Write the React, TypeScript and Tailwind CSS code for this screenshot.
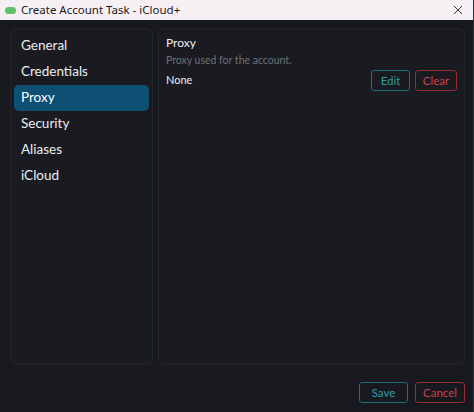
import React from 'react';

const tabs = ['General', 'Credentials', 'Proxy', 'Security', 'Aliases', 'iCloud'];

const TitleBar: React.FC = () => (
  <div className="h-5 flex items-center bg-[#f6eff3] text-[#1a1a1a] pl-[5px] pr-[10px] shrink-0">
    <div className="w-[11px] h-[7px] rounded-full bg-[#5fbf6a] mr-[5px]" />
    <span className="text-[11.5px] font-['Noto_Sans',sans-serif] leading-none">Create Account Task - iCloud+</span>
    <svg className="ml-auto" width="10" height="10" viewBox="0 0 10 10">
      <path d="M1 1 L9 9 M9 1 L1 9" stroke="#333" strokeWidth="1" />
    </svg>
  </div>
);

const App: React.FC = () => {
  const active = 'Proxy';
  return (
    <div className="w-[474px] h-[412px] flex flex-col bg-[#17191e] font-['Lato',sans-serif] overflow-hidden border-r border-[#2c2f35]">
      <TitleBar />
      <div className="flex-1 flex flex-col pl-[10px] pr-[8px] pt-2 pb-[9px]">
        <div className="flex gap-[5px] h-[337px]">
          {/* tab list */}
          <div className="w-[143px] rounded-md border border-[#22262c] bg-[#191b20] px-[3px] pt-[4px] flex flex-col">
            {tabs.map((t) => (
              <div
                key={t}
                className={`h-[26px] flex items-center px-[7px] rounded-[5px] text-[13.5px] pb-[2px] ${
                  t === active ? 'bg-[#0d5074] text-white' : 'text-[#eceef0]'
                }`}
              >
                {t}
              </div>
            ))}
          </div>
          {/* proxy settings */}
          <div className="flex-1 rounded-md border border-[#22262c] bg-[#191b20] px-[7px] pt-[6px]">
            <div className="text-[12px] text-[#eceef0] leading-4">Proxy</div>
            <div className="text-[10.5px] text-[#6c7177] leading-4 mt-[1px]">Proxy used for the account.</div>
            <div className="flex items-center mt-[2px]">
              <span className="text-[11px] text-[#eceef0]">None</span>
              <div className="ml-auto flex gap-[5px]">
                <button className="w-[39px] h-[21px] rounded-[3px] border border-[#1d6f7c] text-[#2a9eaa] text-[11.5px]">Edit</button>
                <button className="w-[42px] h-[21px] rounded-[3px] border border-[#9a2c37] text-[#c8424d] text-[11.5px]">Clear</button>
              </div>
            </div>
          </div>
        </div>
        <div className="mt-auto flex justify-end gap-[7px]">
          <button className="w-[49px] h-[21px] rounded-[3px] border border-[#1d6f7c] text-[#2a9eaa] text-[11.5px]">Save</button>
          <button className="w-[50px] h-[21px] rounded-[3px] border border-[#9a2c37] text-[#c8424d] text-[11.5px]">Cancel</button>
        </div>
      </div>
    </div>
  );
};

export default App;
